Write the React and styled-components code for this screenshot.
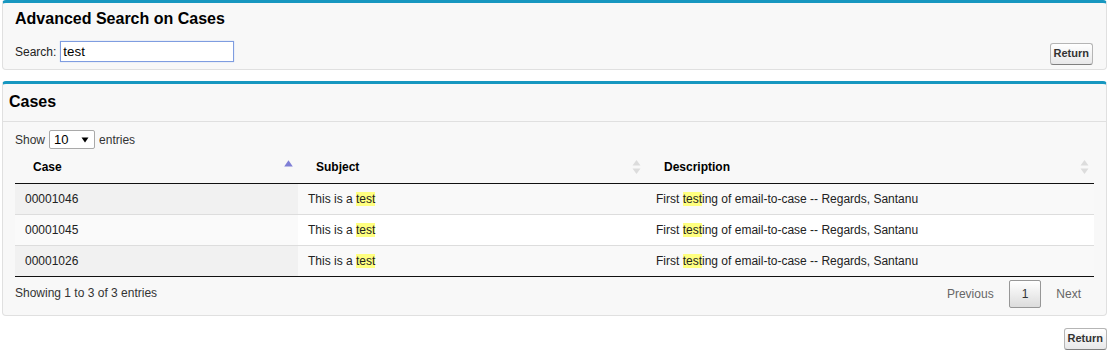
import React from "react";
import styled, { createGlobalStyle } from "styled-components";

const Global = createGlobalStyle`
  html, body { margin: 0; padding: 0; background: #fff; }
  body { font-family: "Liberation Sans", Arial, sans-serif; font-size: 12px; color: #000; }
  * { box-sizing: border-box; }
`;

const Page = styled.div`
  padding: 0 9px 0 2px;
  display: flex;
  flex-direction: column;
`;

const Panel = styled.section`
  background: #f8f8f8;
  border: 1px solid #e0e0e0;
  border-top: 3px solid #1797c0;
  border-radius: 4px;
  margin-top: ${(p) => p.$gap || 0}px;
`;

const PanelTitle = styled.h2`
  margin: 0;
  padding: 7px 12px 0;
  font-size: 16px;
  line-height: 18px;
  font-weight: bold;
  color: #000;
`;

const SearchRow = styled.div`
  display: flex;
  justify-content: space-between;
  align-items: flex-end;
  margin-top: 13px;
  padding: 0 13px 4px 12px;
`;

const SearchGroup = styled.label`
  display: flex;
  align-items: center;
  gap: 4px;
  font-size: 12px;
  color: #222;
  padding-bottom: 3px;
`;

const SearchInput = styled.input`
  width: 174px;
  height: 21px;
  border: 1px solid #7f9de0;
  box-shadow: 0 0 1px #a9c0f0;
  padding: 0 2px;
  font-family: "Liberation Sans", Arial, sans-serif;
  font-size: 13.33px;
  color: #000;
  outline: none;
  background: #fff;
`;

const Button = styled.button`
  font-family: "Liberation Sans", Arial, sans-serif;
  font-size: 11px;
  font-weight: bold;
  line-height: 13px;
  color: #333;
  padding: 3px 3px 4px;
  border: 1px solid #b5b5b5;
  border-bottom-color: #7f7f7f;
  border-radius: 3px;
  background: linear-gradient(#ffffff, #e8e8e9);
  cursor: pointer;
`;

const PanelHeader = styled.h3`
  margin: 0;
  padding: 9px 6px 10px;
  font-size: 16px;
  line-height: 18px;
  font-weight: bold;
  color: #000;
  border-bottom: 1px solid #e0e0e0;
`;

const PanelBody = styled.div`
  padding: 8px 12px 7px;
`;

const LengthRow = styled.div`
  display: flex;
  align-items: center;
  gap: 4px;
  color: #333;
  font-size: 12px;
  margin-bottom: 1px;
`;

const FakeSelect = styled.div`
  width: 46px;
  height: 19px;
  border: 1px solid #a9a9a9;
  background: #fff;
  display: flex;
  align-items: center;
  justify-content: space-between;
  padding: 0 5px 0 4px;
  font-size: 13px;
  color: #000;
  border-radius: 2px;
`;

const Table = styled.table`
  width: 100%;
  border-collapse: collapse;
  table-layout: fixed;
`;

const Th = styled.th`
  position: relative;
  text-align: left;
  font-weight: bold;
  font-size: 12px;
  line-height: 14px;
  padding: 10px 18px 9px;
  border-bottom: 1px solid #111;
  color: #000;
`;

const SortIcon = styled.svg`
  position: absolute;
  right: 5px;
  top: 50%;
  transform: translateY(${(p) => (p.$raise ? "-100%" : "-50%")});
`;

const Tr = styled.tr`
  background: ${(p) => (p.$odd ? "#f9f9f9" : "#ffffff")};
  &:not(:first-child) td { border-top: 1px solid #ddd; }
  &:last-child td { border-bottom: 1px solid #111; }
`;

const Td = styled.td`
  padding: 8px 10px;
  font-size: 12px;
  line-height: 14px;
  color: #222;
  background: ${(p) => (p.$sorted ? (p.$odd ? "#f1f1f1" : "#fafafa") : "transparent")};
`;

const Mark = styled.span`
  background: #ffff80;
`;

const Footer = styled.div`
  display: flex;
  justify-content: space-between;
  align-items: flex-start;
`;

const Info = styled.div`
  padding-top: 9px;
  color: #333;
  font-size: 12px;
  line-height: 14px;
`;

const Pager = styled.div`
  display: flex;
  gap: 2px;
  padding-top: 3px;
`;

const PageBtn = styled.span`
  display: inline-block;
  padding: 6px 12px;
  font-size: 12px;
  line-height: 14px;
  border: 1px solid ${(p) => (p.$current ? "#979797" : "transparent")};
  border-radius: 2px;
  color: ${(p) => (p.$current ? "#333" : "#666")};
  background: ${(p) => (p.$current ? "linear-gradient(#ffffff, #dcdcdc)" : "transparent")};
`;

const BottomBar = styled.div`
  display: flex;
  justify-content: flex-end;
  margin-top: 12px;
`;

const SortAsc = () => (
  <SortIcon $raise width="9" height="7" viewBox="0 0 9 7">
    <path d="M4.5 0.3 L8.8 6.5 L0.2 6.5 Z" fill="#7f7fd6" />
  </SortIcon>
);

const SortBoth = () => (
  <SortIcon width="9" height="15" viewBox="0 0 9 15">
    <path d="M4.5 0.5 L8.5 6 L0.5 6 Z" fill="#dcdcdc" />
    <path d="M4.5 14.5 L8.5 9 L0.5 9 Z" fill="#dcdcdc" />
  </SortIcon>
);

const rows = ["00001046", "00001045", "00001026"];

export default function App() {
  return (
    <>
      <Global />
      <Page>
        <Panel>
          <PanelTitle>Advanced Search on Cases</PanelTitle>
          <SearchRow>
            <SearchGroup>
              Search:
              <SearchInput defaultValue="test" />
            </SearchGroup>
            <Button>Return</Button>
          </SearchRow>
        </Panel>
        <Panel $gap={11}>
          <PanelHeader>Cases</PanelHeader>
          <PanelBody>
            <LengthRow>
              Show
              <FakeSelect>
                <span>10</span>
                <svg width="8" height="6" viewBox="0 0 8 6">
                  <path d="M0.5 0.5 L7.5 0.5 L4 5.5 Z" fill="#000" />
                </svg>
              </FakeSelect>
              entries
            </LengthRow>
            <Table>
              <colgroup>
                <col style={{ width: "283px" }} />
                <col style={{ width: "348px" }} />
                <col />
              </colgroup>
              <thead>
                <tr>
                  <Th>Case<SortAsc /></Th>
                  <Th>Subject<SortBoth /></Th>
                  <Th>Description<SortBoth /></Th>
                </tr>
              </thead>
              <tbody>
                {rows.map((r, i) => (
                  <Tr key={r} $odd={i % 2 === 0}>
                    <Td $sorted $odd={i % 2 === 0}>{r}</Td>
                    <Td>This is a <Mark>test</Mark></Td>
                    <Td>First <Mark>test</Mark>ing of email-to-case -- Regards, Santanu</Td>
                  </Tr>
                ))}
              </tbody>
            </Table>
            <Footer>
              <Info>Showing 1 to 3 of 3 entries</Info>
              <Pager>
                <PageBtn>Previous</PageBtn>
                <PageBtn $current>1</PageBtn>
                <PageBtn>Next</PageBtn>
              </Pager>
            </Footer>
          </PanelBody>
        </Panel>
        <BottomBar>
          <Button>Return</Button>
        </BottomBar>
      </Page>
    </>
  );
}
